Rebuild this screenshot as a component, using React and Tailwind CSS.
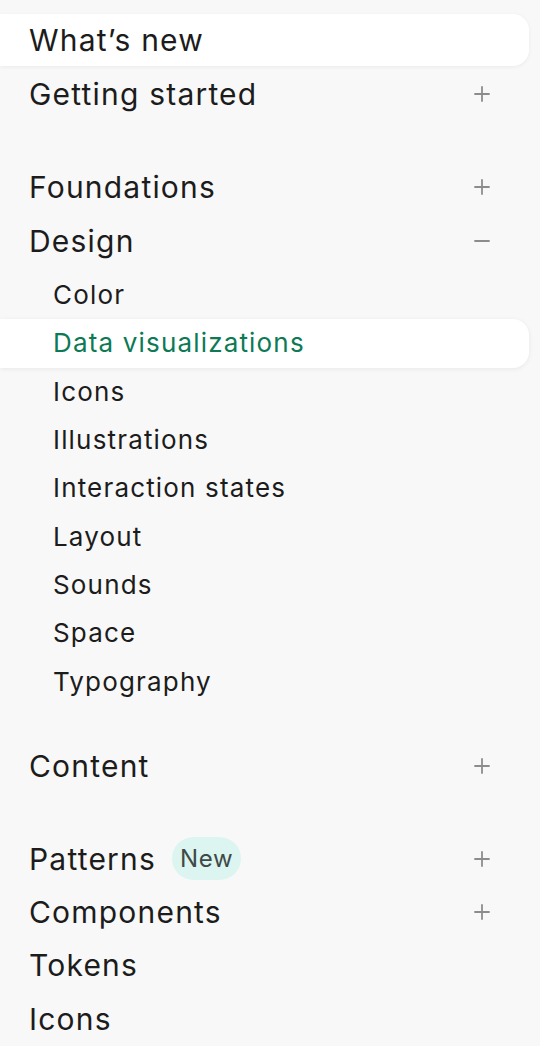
import { Plus, Minus } from 'lucide-react';

const font = { fontFamily: 'Inter, "Noto Sans", sans-serif' };

function TopRow({ label, icon, active, badge }) {
  return (
    <div
      className={`flex items-center h-[52px] pl-[29px] pr-[35px] rounded-r-[16px] ${
        active ? 'bg-white shadow-[0_1px_4px_rgba(0,0,0,0.06)]' : ''
      }`}
    >
      <span className="text-[30px] leading-none text-[#1c1c1c] tracking-[0.04em]">{label}</span>
      {badge && (
        <span className="ml-[16px] h-[43px] px-[8px] flex items-center rounded-full bg-[#dcf5f0] text-[24px] tracking-[0.03em] text-[#3e4a48]">
          {badge}
        </span>
      )}
      <span className="ml-auto text-[#8c8c8c]">
        {icon === 'plus' && <Plus className="w-6 h-6" strokeWidth={1.8} />}
        {icon === 'minus' && <Minus className="w-6 h-6" strokeWidth={1.8} />}
      </span>
    </div>
  );
}

function SubRow({ label, active }) {
  return (
    <div
      className={`flex items-center h-[48.3px] pl-[53px] rounded-r-[16px] ${
        active ? 'bg-white shadow-[0_1px_5px_rgba(0,0,0,0.07)]' : ''
      }`}
    >
      <span
        className={`text-[26px] leading-none tracking-[0.045em] ${
          active ? 'text-[#0b7a55]' : 'text-[#1c1c1c]'
        }`}
      >
        {label}
      </span>
    </div>
  );
}

export default function App() {
  const design = [
    'Color',
    'Data visualizations',
    'Icons',
    'Illustrations',
    'Interaction states',
    'Layout',
    'Sounds',
    'Space',
    'Typography',
  ];
  return (
    <div className="min-h-screen bg-[#f8f8f8] pt-[14px] w-[540px] overflow-hidden" style={font}>
      <nav className="w-[529px] flex flex-col">
        <div className="flex flex-col gap-[2px]">
          <TopRow label="What’s new" active />
          <TopRow label="Getting started" icon="plus" />
        </div>

        <div className="flex flex-col gap-[2px] mt-[41px]">
          <TopRow label="Foundations" icon="plus" />
          <TopRow label="Design" icon="minus" />
        </div>
        <div className="flex flex-col pt-[4px]">
          {design.map((d) => (
            <SubRow key={d} label={d} active={d === 'Data visualizations'} />
          ))}
        </div>

        <div className="mt-[34px]">
          <TopRow label="Content" icon="plus" />
        </div>

        <div className="flex flex-col gap-[1.3px] mt-[41px]">
          <TopRow label="Patterns" icon="plus" badge="New" />
          <TopRow label="Components" icon="plus" />
          <TopRow label="Tokens" />
          <TopRow label="Icons" />
        </div>
      </nav>
    </div>
  );
}
